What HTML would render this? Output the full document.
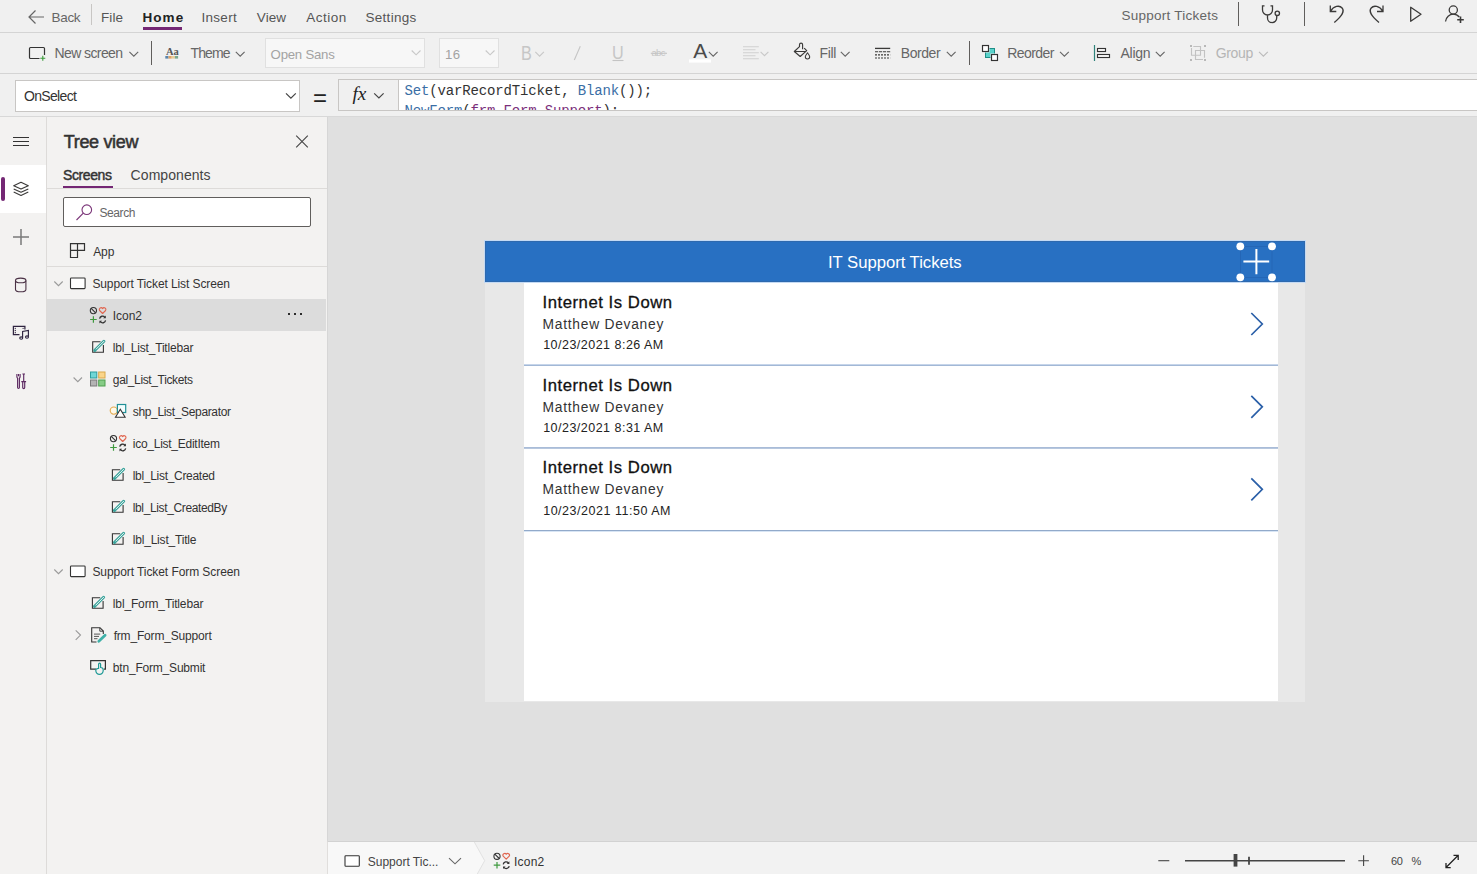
<!DOCTYPE html>
<html><head><meta charset="utf-8"><title>Power Apps</title>
<style>
*{box-sizing:border-box;margin:0;padding:0}
html,body{width:1477px;height:874px;overflow:hidden;background:#f3f2f1;font-family:"Liberation Sans",sans-serif;color:#333}
.a{position:absolute}
.t{position:absolute;white-space:pre}
svg{position:absolute;overflow:visible;fill:none}
#topbar{position:absolute;left:0;top:0;width:1477px;height:33px;background:#f0f0f0;border-bottom:1px solid #d4d4d4}
#toolbar{position:absolute;left:0;top:33px;width:1477px;height:41px;background:#f0f0f0;border-bottom:1px solid #d4d4d4}
#fbar{position:absolute;left:0;top:74px;width:1477px;height:43px;background:#f0f0f0;border-bottom:1px solid #d8d8d8}
#rail{position:absolute;left:0;top:117px;width:47px;height:757px;background:#f3f2f1;border-right:1px solid #dddbd9}
#tree{position:absolute;left:47px;top:117px;width:280px;height:757px;background:#f3f2f1}
#canvas{position:absolute;left:327px;top:117px;width:1150px;height:724px;background:#e0e0e0;border-left:1px solid #d6d6d6}
#status{position:absolute;left:327px;top:841px;width:1150px;height:33px;background:#f2f2f2;border-top:1px solid #d2d2d2;border-left:1px solid #e0dedc}
.vsep{position:absolute;width:1px;background:#605e5c}
.box{position:absolute;border:1px solid #c8c6c4;background:#fff}
</style></head><body>
<div id="topbar"></div>
<div id="toolbar"></div>
<div id="fbar"></div>
<div id="rail"></div>
<div id="tree"></div>
<div id="canvas"></div>
<div id="status"></div>

<!-- top bar decorations -->
<div class="vsep" style="left:91px;top:4px;height:21px;background:#c8c6c4"></div>
<div class="a" style="left:143px;top:27px;width:39px;height:3px;background:#742774"></div>
<div class="vsep" style="left:1238px;top:2px;height:24px"></div>
<div class="vsep" style="left:1304px;top:2px;height:24px"></div>
<!-- toolbar decorations -->
<div class="vsep" style="left:151px;top:41px;height:24px"></div>
<div class="vsep" style="left:969px;top:41px;height:24px"></div>
<div class="box" style="left:265px;top:38px;width:160px;height:30px;background:#f7f7f7;border-color:#e0e0e0"></div>
<div class="box" style="left:439px;top:38px;width:60px;height:30px;background:#f7f7f7;border-color:#e0e0e0"></div>
<!-- formula bar -->
<div class="box" style="left:15px;top:80px;width:285px;height:32px"></div>
<div class="box" style="left:338px;top:79px;width:61px;height:32px;background:#f0f0f0"></div>
<div class="box" style="left:398px;top:79px;width:1085px;height:32px;overflow:hidden;font-family:'Liberation Mono',monospace;font-size:14px;letter-spacing:-0.15px;line-height:20.5px;white-space:pre;color:#333"><div class="a" style="left:5.5px;top:0.8px"><span style="color:#3a6ea5">Set</span>(varRecordTicket, <span style="color:#3a6ea5">Blank</span>());
<span style="color:#3a6ea5">NewForm</span>(<span style="color:#7b2f7b">frm_Form_Support</span>);</div></div>
<!-- rail -->
<div class="a" style="left:0;top:165px;width:46px;height:48px;background:#fff"></div>
<div class="a" style="left:1px;top:177px;width:4px;height:24px;border-radius:2px;background:#742774"></div>
<!-- tree -->
<div class="a" style="left:63px;top:186px;width:50px;height:2px;background:#742774"></div>
<div class="a" style="left:47px;top:188px;width:280px;height:1px;background:#dddbd9"></div>
<div class="a" style="left:63px;top:197px;width:248px;height:30px;background:#fff;border:1px solid #605e5c;border-radius:2px"></div>
<div class="a" style="left:47px;top:266px;width:280px;height:1px;background:#dddbd9"></div>
<div class="a" style="left:47px;top:299px;width:279px;height:32px;background:#dcdcdc"></div>
<!-- canvas app -->
<div class="a" style="left:485px;top:241px;width:820px;height:461px;background:#e8e8e8"></div>
<div class="a" style="left:523.600px;top:282px;width:754.400px;height:419px;background:#fff"></div>
<div class="a" style="left:485px;top:241px;width:820px;height:41px;background:#2870c2;border:1px solid #2e69ae;box-shadow:0 0 0 1px #c4daf4"></div>
<div class="a" style="left:523.600px;top:364px;width:754.400px;height:2px;background:linear-gradient(#c6d5ea 50%,#a2b8d6 50%)"></div>
<div class="a" style="left:523.600px;top:447px;width:754.400px;height:2px;background:linear-gradient(#a9bcd8 50%,#b7c7de 50%)"></div>
<div class="a" style="left:523.600px;top:530px;width:754.400px;height:2px;background:linear-gradient(#92aaca 50%,#d8e5f4 50%)"></div>
<svg width="1477" height="874" style="left:0;top:0" viewBox="0 0 1477 874" stroke-linecap="butt" stroke-linejoin="miter">
<path d="M328 842h146.300l10.400 18.700l-7.400 13.300h-149.300z" fill="#f8f8f8" stroke="none"/><path d="M474.300 842l10.400 18.700l-7.400 13.300" stroke="#e2e2e2" stroke-width="1"/>
<!-- ===== top bar ===== -->
<g stroke="#666" stroke-width="1.2">
<path d="M44 17H29M35.5 10.5L29 17l6.5 6.5"/>
</g>
<g stroke="#3b3a39" stroke-width="1.3">
<!-- stethoscope -->
<path d="M1264.5 5.8h-2v4.2a5 5 0 0 0 10 0V5.8h-2M1267.5 15v3a4.6 4.6 0 0 0 9.2 0v-2.2"/>
<circle cx="1277.3" cy="13.3" r="2.2"/>
<!-- undo -->
<path d="M1330.3 5.5v6h6M1330.6 11.3c3-5.5 9-6.3 11.500-3.300c2.800 3.400 .2 7.500-7.800 14.500"/>
<!-- redo -->
<path d="M1383 5.500v6h-6M1382.700 11.300c-3-5.500-9-6.300-11.500-3.300c-2.800 3.400-.2 7.500 7.800 14.500"/>
<!-- play -->
<path d="M1410.700 7.300v14l10.300-7z" stroke-linejoin="round"/>
<!-- user -->
<circle cx="1453.300" cy="10" r="4.100"/>
<path d="M1445.500 21.500c.5-4.500 4-7.300 7.800-7.300c2.500 0 4.500 1 6 2.800"/>
<path d="M1460.500 16.500v6.500M1457.200 19.700h6.600" stroke-width="1.600"/>
</g>
<!-- ===== toolbar ===== -->
<!-- new screen -->
<rect x="29.500" y="47.500" width="15" height="11" rx="1" stroke="#333" stroke-width="1.200"/>
<rect x="39.500" y="55" width="7" height="6" fill="#f0f0f0" stroke="none"/>
<path d="M42.800 55.800v5M40.300 58.300h5" stroke="#3a9a3a" stroke-width="1.100"/>
<!-- theme colour squares -->
<g stroke="none"><rect x="165.300" y="56" width="3.200" height="2.600" fill="#5b86ad"/><rect x="168.500" y="56" width="3.200" height="2.600" fill="#e0a060"/><rect x="171.700" y="56" width="3.200" height="2.600" fill="#e8cc98"/><rect x="174.900" y="56" width="3.200" height="2.600" fill="#7aa890"/></g>
<!-- chevrons (toolbar) -->
<g stroke="#666" stroke-width="1.100">
<path d="M129.400 51.800l4.400 4.400l4.400-4.400"/>
<path d="M235.800 51.800l4.400 4.400l4.400-4.400"/>
<path d="M708.800 51.800l4.400 4.400l4.400-4.400"/>
<path d="M840.800 51.800l4.400 4.400l4.400-4.400"/>
<path d="M946.800 51.800l4.400 4.400l4.400-4.400"/>
<path d="M1060 51.800l4.400 4.400l4.400-4.400"/>
<path d="M1155.800 51.800l4.400 4.400l4.400-4.400"/>
</g>
<g stroke="#c8c8c8" stroke-width="1.100">
<path d="M411.700 50.500l4.400 4.300l4.400-4.300"/>
<path d="M485.700 50.500l4.400 4.300l4.400-4.300"/>
<path d="M535.300 51.800l4.300 4.300l4.300-4.300"/>
<path d="M760.600 51.800l3.900 3.900l3.900-3.900"/>
<path d="M1259 51.800l4.400 4.400l4.400-4.400" stroke="#bbb"/>
</g>
<!-- italic slash, underline U bar, abc strike -->
<g stroke="#c4c4c4" stroke-width="1.100">
<path d="M580.300 46.200L574.300 60"/>
<path d="M612.500 60.500h11"/>
<path d="M650.800 53.300h16.200"/>
<!-- paragraph align -->
<path d="M743 46.700h15.800M743 49.700h12.500M743 52.700h15.800M743 55.800h12.500M743 58.800h15.800" stroke="#cfcfcf"/>
</g>
<!-- font colour A underline -->
<rect x="689" y="59.400" width="22" height="3.200" fill="#fff" stroke="none"/>
<!-- fill bucket -->
<g stroke="#3b3a39" stroke-width="1.150" stroke-linejoin="round">
<path d="M804.200 48.200L806.700 50.600L800.200 56.500L794.300 51.500L799.500 46.700V44.700a1.550 1.550 0 0 1 3.100 0V49.200M794.300 51.500H806"/>
<path d="M807.500 52.800c-1.100 1.700-2.200 2.900-2.200 4a2.200 2.200 0 0 0 4.400 0c0-1.100-1.100-2.300-2.200-4z" stroke-width="1.050"/>
</g>
<!-- border style -->
<g stroke="#3b3a39">
<path d="M875 48.400h15.200" stroke-width="1.300"/>
<path d="M875 51.700h15.200" stroke-width="1.100" stroke-dasharray="3.200 .8"/>
<path d="M875 54.900h15.200" stroke-width="1.100" stroke-dasharray="2 1"/>
<path d="M875 58h15.200" stroke-width="1.100" stroke-dasharray="2 1"/>
</g>
<!-- reorder -->
<g stroke-width="1">
<rect x="985.500" y="48.500" width="9" height="9" fill="#5ad2ca" stroke="#1f8f88"/>
<rect x="981.500" y="44.500" width="8" height="8" fill="#f7f7f7" stroke="none"/>
<rect x="990.500" y="53.500" width="8" height="8" fill="#f7f7f7" stroke="none"/>
<rect x="982.500" y="45.500" width="6" height="6" fill="#fff" stroke="#333" stroke-width="1.200"/>
<rect x="991.500" y="54.500" width="6" height="6" fill="#fff" stroke="#333" stroke-width="1.200"/>
</g>
<!-- align -->
<path d="M1094.500 45v16" stroke="#2f837b" stroke-width="1.200"/>
<g stroke="#333" stroke-width="1.150" fill="#fff"><rect x="1097.500" y="48.500" width="8" height="3"/><rect x="1097.500" y="54.500" width="12" height="3"/></g>
<!-- group (disabled) -->
<g stroke="#c2c2c2" stroke-width="1.100">
<path d="M1193.300 46.500h7.200v8.800h-9v-7.300"/><path d="M1203 59.500h-7.500v-9h9v7.300"/>
</g>
<g fill="#b8b8b8" stroke="none"><rect x="1190" y="45" width="2" height="2"/><rect x="1204" y="45" width="2" height="2"/><rect x="1190" y="59" width="2" height="2"/><rect x="1204" y="59" width="2" height="2"/></g>
<!-- ===== formula bar ===== -->
<g stroke="#444" stroke-width="1.200">
<path d="M286 93.300l4.900 4.900l4.900-4.900"/>
<path d="M374.200 93.300l4.700 4.700l4.700-4.700"/>
</g>
<!-- ===== rail ===== -->
<g stroke="#3b3a39" stroke-width="1.100">
<path d="M13 137.500h16M13 141.500h16M13 145.500h16" stroke="#333" stroke-width="1.200"/>
<!-- layers -->
<path d="M21 182.300l7.300 3.400l-7.300 3.400l-7.300-3.400zM13.700 188.900l7.300 3.400l7.300-3.400M13.700 192.100l7.300 3.400l7.300-3.400" stroke-linejoin="round"/>
<!-- plus -->
<path d="M21 229v16M13 237h16" stroke="#7a7a7a" stroke-width="1.500"/>
<!-- cylinder -->
<g stroke="#4a3145"><ellipse cx="20.700" cy="280.400" rx="5.200" ry="2.300"/><path d="M15.500 280.400v9a5.200 2.300 0 0 0 10.400 0v-9"/></g>
<!-- media -->
<g stroke="#2f2440" stroke-width="1.250">
<path d="M19.500 334.600H13.400V326.400H24.900V329.600"/>
<path d="M15.300 328.300v.01M15.300 330.500v.01M15.300 332.700v.01M23.100 328.300v.01" stroke-width="1.300" stroke-linecap="round"/>
<path d="M22.600 337.800V331.400L28.400 330.400V336.800" stroke-width="1.150"/>
<ellipse cx="21.200" cy="338.100" rx="1.500" ry="1.200" stroke-width="1.100"/><ellipse cx="27" cy="337.100" rx="1.500" ry="1.200" stroke-width="1.100"/>
</g>
<!-- tools -->
<g stroke="#5d2a62" stroke-width="1.150">
<path d="M16.900 374v2.700a1.900 1.900 0 0 0 .700 1.500v9.400a.900 .900 0 0 0 1.800 0v-9.400a1.900 1.900 0 0 0 .700-1.500v-2.700"/>
<path d="M18.500 374v2.300" stroke-width="1"/>
<path d="M22.400 374h2.600M23.700 374v7.500M21.300 381.600h4.800M22.700 381.600v6a1 1 0 0 0 2 0v-6"/>
</g>
</g>
<!-- ===== tree ===== -->
<path d="M296.200 135.700l11.600 11.600M307.800 135.700l-11.600 11.600" stroke="#444" stroke-width="1.100"/>
<!-- search icon -->
<g stroke="#7a3478" stroke-width="1.100"><circle cx="86.800" cy="209.700" r="4.800"/><path d="M83.300 213.200l-6.800 6.800"/></g>
<!-- App icon -->
<path d="M70.500 243.700h14v6.700h-14zM77.500 243.700v13.800h-7v-7.100" stroke="#333" stroke-width="1.200"/>
<!-- ellipsis -->
<g fill="#2b2b2b" stroke="none"><rect x="288" y="313" width="2" height="2"/><rect x="294" y="313" width="2" height="2"/><rect x="300" y="313" width="2" height="2"/></g>
<!-- tree chevrons -->
<g stroke="#9a9a9a" stroke-width="1.100">
<path d="M54.300 281.500l4.200 4.200l4.200-4.200"/>
<path d="M73.600 377.500l4.200 4.200l4.200-4.200"/>
<path d="M54.300 569.500l4.200 4.200l4.200-4.200"/>
<path d="M75.700 630.300l4.800 4.800l-4.800 4.800"/>
</g>
<!-- screen icons -->
<g stroke="#333" stroke-width="1.100">
<rect x="70.500" y="278" width="14.600" height="10.600" rx=".8" fill="#fff"/>
<rect x="70.500" y="566" width="14.600" height="10.600" rx=".8" fill="#fff"/>
<rect x="345" y="855.700" width="14.300" height="10.600" rx=".8" fill="#fff"/>
</g>
<!-- gallery icon -->
<g stroke-width="1">
<rect x="90.500" y="372" width="6.300" height="6" fill="#6fd6d6" stroke="#2d9c9c"/><rect x="98.700" y="372" width="6.300" height="6" fill="#fad58a" stroke="#d8a84a"/>
<rect x="90.500" y="380" width="6.300" height="6" fill="#b4b4b4" stroke="#7a7a7a"/><rect x="98.700" y="380" width="6.300" height="6" fill="#86cc86" stroke="#4f9f4f"/>
</g>
<!-- ===== status bar ===== -->
<g stroke="#666" stroke-width="1.100"><path d="M449 858.200l6 5.600l6-5.600"/></g>
<g stroke="#444">
<path d="M1158.300 860.700h11" stroke-width="1.100"/>
<path d="M1185 860.700h160" stroke-width="1.600"/>
<path d="M1235.500 854v12.600" stroke-width="3.800"/>
<path d="M1249 856.800v8" stroke-width="1.800"/>
<path d="M1358.300 860.700h10.600M1363.600 855.300v10.800" stroke-width="1.100"/>
<path d="M1446 867.500l12-12M1453.500 855.300h4.700v4.700M1450.700 867.700h-4.700v-4.700" stroke="#222" stroke-width="1.300"/>
</g>
<!-- ===== canvas icons ===== -->
<g stroke="#2a5fa8" stroke-width="1.700"><path d="M1251.300 313l11 11l-11 11"/><path d="M1251.300 395.800l11 11l-11 11"/><path d="M1251.300 478.300l11 11l-11 11"/></g>
<rect x="1240.500" y="246.500" width="31.500" height="31" stroke="#2466b6" stroke-width="1"/>
<path d="M1243.400 261.600h25.800M1256.400 249v25.300" stroke="#fff" stroke-width="2"/>
<g fill="#fff" stroke="none"><circle cx="1240.300" cy="246.300" r="3.900"/><circle cx="1272" cy="246.300" r="3.900"/><circle cx="1240.300" cy="277.300" r="3.900"/><circle cx="1272" cy="277.300" r="3.900"/></g>
</svg>
<svg width="1477" height="874" style="left:0;top:0" viewBox="0 0 1477 874">
<g transform="translate(0,0)" stroke-width="1.1">
<circle cx="93.4" cy="310.6" r="3.1" stroke="#333"/><path d="M91.2 308.400l4.400 4.400" stroke="#333"/>
<path d="M102.600 313.500l-3-3a1.700 1.700 0 0 1 3-1.900a1.700 1.700 0 0 1 3 1.900z" stroke="#e0654f" stroke-linejoin="round"/>
<path d="M93.400 316.200v6.600M90.100 319.500h6.600" stroke="#3f9a3f" stroke-width="1.200"/>
<path d="M99.600 318.600a3 3 0 0 1 5.300-1.300M105.600 320.400a3 3 0 0 1-5.300 1.300" stroke="#333" stroke-width="1.300"/>
<path d="M105.800 315.600v2.600h-2.600zM99.400 323.400v-2.600h2.600z" fill="#333" stroke="none"/>
</g>
<g transform="translate(20.1,128)" stroke-width="1.1">
<circle cx="93.4" cy="310.6" r="3.1" stroke="#333"/><path d="M91.2 308.400l4.400 4.400" stroke="#333"/>
<path d="M102.600 313.500l-3-3a1.700 1.700 0 0 1 3-1.900a1.700 1.700 0 0 1 3 1.900z" stroke="#e0654f" stroke-linejoin="round"/>
<path d="M93.400 316.200v6.600M90.100 319.500h6.600" stroke="#3f9a3f" stroke-width="1.200"/>
<path d="M99.600 318.600a3 3 0 0 1 5.300-1.300M105.600 320.400a3 3 0 0 1-5.300 1.300" stroke="#333" stroke-width="1.300"/>
<path d="M105.800 315.600v2.600h-2.600zM99.400 323.400v-2.600h2.600z" fill="#333" stroke="none"/>
</g>
<g transform="translate(403.6,545.7)" stroke-width="1.1">
<circle cx="93.4" cy="310.6" r="3.1" stroke="#333"/><path d="M91.2 308.400l4.400 4.400" stroke="#333"/>
<path d="M102.600 313.500l-3-3a1.700 1.700 0 0 1 3-1.900a1.700 1.700 0 0 1 3 1.900z" stroke="#e0654f" stroke-linejoin="round"/>
<path d="M93.400 316.200v6.600M90.100 319.500h6.600" stroke="#3f9a3f" stroke-width="1.200"/>
<path d="M99.600 318.600a3 3 0 0 1 5.300-1.300M105.600 320.400a3 3 0 0 1-5.300 1.300" stroke="#333" stroke-width="1.300"/>
<path d="M105.800 315.600v2.600h-2.600zM99.400 323.400v-2.600h2.600z" fill="#333" stroke="none"/>
</g>
<g transform="translate(0,0)">
<path d="M100.500 341.700h-7.800v10.600h10.700v-7.300" stroke="#333" stroke-width="1.100"/>
<path d="M103.900 341.300l-8 8l-1.100 1.100" stroke="#3aa39b" stroke-width="3" stroke-linecap="round"/>
<path d="M103.900 341.300l-7.800 7.800" stroke="#e8f7f5" stroke-width="1" stroke-linecap="round"/>
</g>
<g transform="translate(19.7,128)">
<path d="M100.500 341.700h-7.800v10.600h10.700v-7.300" stroke="#333" stroke-width="1.100"/>
<path d="M103.900 341.300l-8 8l-1.100 1.100" stroke="#3aa39b" stroke-width="3" stroke-linecap="round"/>
<path d="M103.900 341.300l-7.800 7.800" stroke="#e8f7f5" stroke-width="1" stroke-linecap="round"/>
</g>
<g transform="translate(19.7,160)">
<path d="M100.500 341.700h-7.800v10.600h10.700v-7.300" stroke="#333" stroke-width="1.100"/>
<path d="M103.900 341.300l-8 8l-1.100 1.100" stroke="#3aa39b" stroke-width="3" stroke-linecap="round"/>
<path d="M103.900 341.300l-7.800 7.800" stroke="#e8f7f5" stroke-width="1" stroke-linecap="round"/>
</g>
<g transform="translate(19.7,192)">
<path d="M100.500 341.700h-7.800v10.600h10.700v-7.300" stroke="#333" stroke-width="1.100"/>
<path d="M103.900 341.300l-8 8l-1.100 1.100" stroke="#3aa39b" stroke-width="3" stroke-linecap="round"/>
<path d="M103.900 341.300l-7.800 7.800" stroke="#e8f7f5" stroke-width="1" stroke-linecap="round"/>
</g>
<g transform="translate(-0.3,256)">
<path d="M100.500 341.700h-7.800v10.600h10.700v-7.300" stroke="#333" stroke-width="1.100"/>
<path d="M103.900 341.300l-8 8l-1.100 1.100" stroke="#3aa39b" stroke-width="3" stroke-linecap="round"/>
<path d="M103.900 341.300l-7.800 7.800" stroke="#e8f7f5" stroke-width="1" stroke-linecap="round"/>
</g>
<g stroke-width="1.100">
<circle cx="113.800" cy="410.600" r="3.600" stroke="#e3aa4e" fill="#fff9ea"/>
<rect x="117.400" y="404.500" width="8.300" height="8" fill="#f2fdfd" stroke="#1f8f96" stroke-width="1.200"/>
<path d="M120.300 409.300l4.800 8h-9.600z" fill="#fff" stroke="#333" stroke-linejoin="miter"/>
</g>
<g stroke-width="1.100">
<path d="M96.500 642h-4.800v-14.300h8.300l3.300 3.300v3" stroke="#333"/>
<path d="M99.800 627.900v3.300h3.300" stroke="#333" stroke-width=".9"/>
<path d="M94 634.100h6.200M94 636.400h5M94 638.700h3.500" stroke="#444" stroke-width=".9"/>
<path d="M105.100 635.300l-6.300 5.900" stroke="#3fb0a8" stroke-width="2.800" stroke-linecap="round"/>
</g>
<g stroke-width="1.200">
<path d="M96 669.200h-5.300v-8.600h14.700v8.600h-1.500" stroke="#333"/>
<path d="M98.600 669v-4.800a1 1 0 0 1 2 0v3.300c1.500 0 2.600 .9 2.600 2.300v.8a3.700 3.700 0 0 1-7.400 0c0-1.500.8-2.200 2.300-1.900" stroke="#1f9a96" stroke-linejoin="round"/>
</g>
</svg>
<span class="t" style="left:51.62px;top:11.00px;font-size:13.5px;line-height:13.5px;color:#666;letter-spacing:-0.352px;">Back</span>
<span class="t" style="left:101.06px;top:11.00px;font-size:13.5px;line-height:13.5px;color:#555;letter-spacing:0.071px;">File</span>
<span class="t" style="left:142.62px;top:11.00px;font-size:13.5px;line-height:13.5px;color:#222;font-weight:700;letter-spacing:1.008px;">Home</span>
<span class="t" style="left:201.38px;top:11.00px;font-size:13.5px;line-height:13.5px;color:#555;letter-spacing:0.311px;">Insert</span>
<span class="t" style="left:256.86px;top:11.00px;font-size:13.5px;line-height:13.5px;color:#555;letter-spacing:0.043px;">View</span>
<span class="t" style="left:306.30px;top:11.00px;font-size:13.5px;line-height:13.5px;color:#555;letter-spacing:0.510px;">Action</span>
<span class="t" style="left:365.40px;top:11.00px;font-size:13.5px;line-height:13.5px;color:#555;letter-spacing:0.314px;">Settings</span>
<span class="t" style="left:1121.62px;top:9.00px;font-size:13.5px;line-height:13.5px;color:#666;letter-spacing:0.241px;">Support Tickets</span>
<span class="t" style="left:54.62px;top:46.00px;font-size:14px;line-height:14px;color:#666;letter-spacing:-0.611px;">New screen</span>
<span class="t" style="left:190.52px;top:46.00px;font-size:14px;line-height:14px;color:#666;letter-spacing:-0.905px;">Theme</span>
<span class="t" style="left:270.62px;top:48.00px;font-size:13.2px;line-height:13.2px;color:#a3a3a3;letter-spacing:-0.223px;">Open Sans</span>
<span class="t" style="left:444.94px;top:48.00px;font-size:13.2px;line-height:13.2px;color:#a3a3a3;letter-spacing:0.428px;">16</span>
<span class="t" style="left:819.62px;top:46.00px;font-size:14px;line-height:14px;color:#666;letter-spacing:-0.410px;">Fill</span>
<span class="t" style="left:900.84px;top:46.00px;font-size:14px;line-height:14px;color:#666;letter-spacing:-0.458px;">Border</span>
<span class="t" style="left:1007.16px;top:46.00px;font-size:14px;line-height:14px;color:#666;letter-spacing:-0.546px;">Reorder</span>
<span class="t" style="left:1120.52px;top:46.00px;font-size:14px;line-height:14px;color:#666;letter-spacing:-0.265px;">Align</span>
<span class="t" style="left:1215.72px;top:46.00px;font-size:14px;line-height:14px;color:#b5b5b5;letter-spacing:-0.345px;">Group</span>
<span class="t" style="left:23.96px;top:89.00px;font-size:14px;line-height:14px;color:#333;letter-spacing:-0.662px;">OnSelect</span>
<span class="t" style="left:313.00px;top:86.00px;font-size:24px;line-height:24px;color:#222;">=</span>
<span class="t" style="left:63.76px;top:133.00px;font-size:18px;line-height:18px;color:#333;letter-spacing:-0.332px;-webkit-text-stroke:0.55px #333;">Tree view</span>
<span class="t" style="left:62.96px;top:168.00px;font-size:14px;line-height:14px;color:#333;letter-spacing:-0.400px;-webkit-text-stroke:0.45px #333;">Screens</span>
<span class="t" style="left:130.62px;top:168.00px;font-size:14px;line-height:14px;color:#444;letter-spacing:0.065px;">Components</span>
<span class="t" style="left:99.40px;top:207.00px;font-size:12px;line-height:12px;color:#666;letter-spacing:-0.390px;">Search</span>
<span class="t" style="left:93.20px;top:246.00px;font-size:12px;line-height:12px;color:#333;letter-spacing:-0.100px;">App</span>
<span class="t" style="left:92.40px;top:278.00px;font-size:12px;line-height:12px;color:#333;letter-spacing:-0.098px;">Support Ticket List Screen</span>
<span class="t" style="left:112.84px;top:310.00px;font-size:12px;line-height:12px;color:#333;letter-spacing:-0.040px;">Icon2</span>
<span class="t" style="left:112.84px;top:342.00px;font-size:12px;line-height:12px;color:#333;letter-spacing:-0.186px;">lbl_List_Titlebar</span>
<span class="t" style="left:112.84px;top:374.00px;font-size:12px;line-height:12px;color:#333;letter-spacing:-0.360px;">gal_List_Tickets</span>
<span class="t" style="left:132.74px;top:406.00px;font-size:12px;line-height:12px;color:#333;letter-spacing:-0.340px;">shp_List_Separator</span>
<span class="t" style="left:132.74px;top:438.00px;font-size:12px;line-height:12px;color:#333;letter-spacing:-0.256px;">ico_List_EditItem</span>
<span class="t" style="left:132.74px;top:470.00px;font-size:12px;line-height:12px;color:#333;letter-spacing:-0.301px;">lbl_List_Created</span>
<span class="t" style="left:132.74px;top:502.00px;font-size:12px;line-height:12px;color:#333;letter-spacing:-0.366px;">lbl_List_CreatedBy</span>
<span class="t" style="left:132.74px;top:534.00px;font-size:12px;line-height:12px;color:#333;letter-spacing:-0.194px;">lbl_List_Title</span>
<span class="t" style="left:92.40px;top:566.00px;font-size:12px;line-height:12px;color:#333;letter-spacing:-0.070px;">Support Ticket Form Screen</span>
<span class="t" style="left:112.84px;top:598.00px;font-size:12px;line-height:12px;color:#333;letter-spacing:-0.143px;">lbl_Form_Titlebar</span>
<span class="t" style="left:113.64px;top:630.00px;font-size:12px;line-height:12px;color:#333;letter-spacing:-0.170px;">frm_Form_Support</span>
<span class="t" style="left:112.84px;top:662.00px;font-size:12px;line-height:12px;color:#333;letter-spacing:-0.197px;">btn_Form_Submit</span>
<span class="t" style="left:367.74px;top:856.00px;font-size:12px;line-height:12px;color:#444;letter-spacing:-0.005px;">Support Tic...</span>
<span class="t" style="left:513.94px;top:856.00px;font-size:12px;line-height:12px;color:#333;letter-spacing:0.240px;">Icon2</span>
<span class="t" style="left:1391.08px;top:856.00px;font-size:11px;line-height:11px;color:#444;letter-spacing:-0.530px;">60</span>
<span class="t" style="left:1411.50px;top:856.00px;font-size:11px;line-height:11px;color:#444;">%</span>
<span class="t" style="left:827.94px;top:255.00px;font-size:16.7px;line-height:16.7px;color:#fff;letter-spacing:-0.025px;">IT Support Tickets</span>
<span class="t" style="left:542.50px;top:295.00px;font-size:16.7px;line-height:16.7px;color:#111;letter-spacing:0.543px;-webkit-text-stroke:0.3px #111;">Internet Is Down</span>
<span class="t" style="left:542.50px;top:318.00px;font-size:13.8px;line-height:13.8px;color:#333;letter-spacing:0.744px;">Matthew Devaney</span>
<span class="t" style="left:543.18px;top:339.00px;font-size:12.5px;line-height:12.5px;color:#222;letter-spacing:0.482px;">10/23/2021 8:26 AM</span>
<span class="t" style="left:542.50px;top:378.00px;font-size:16.7px;line-height:16.7px;color:#111;letter-spacing:0.543px;-webkit-text-stroke:0.3px #111;">Internet Is Down</span>
<span class="t" style="left:542.50px;top:401.00px;font-size:13.8px;line-height:13.8px;color:#333;letter-spacing:0.744px;">Matthew Devaney</span>
<span class="t" style="left:543.18px;top:422.00px;font-size:12.5px;line-height:12.5px;color:#222;letter-spacing:0.482px;">10/23/2021 8:31 AM</span>
<span class="t" style="left:542.50px;top:460.00px;font-size:16.7px;line-height:16.7px;color:#111;letter-spacing:0.543px;-webkit-text-stroke:0.3px #111;">Internet Is Down</span>
<span class="t" style="left:542.50px;top:483.00px;font-size:13.8px;line-height:13.8px;color:#333;letter-spacing:0.744px;">Matthew Devaney</span>
<span class="t" style="left:543.18px;top:505.00px;font-size:12.5px;line-height:12.5px;color:#222;letter-spacing:0.522px;">10/23/2021 11:50 AM</span>
<span class="t" style="left:166.00px;top:47.00px;font-size:10.5px;line-height:10.5px;color:#555;font-weight:700;font-family:'Liberation Serif',serif;">Aa</span>
<span class="t" style="left:520.70px;top:44.00px;font-size:19.3px;line-height:19.3px;color:#c6c6c6;transform:scaleX(.84);transform-origin:0 0;">B</span>
<span class="t" style="left:612.10px;top:44.00px;font-size:18.8px;line-height:18.8px;color:#c6c6c6;transform:scaleX(.86);transform-origin:0 0;">U</span>
<span class="t" style="left:651.54px;top:48.00px;font-size:9.5px;line-height:9.5px;color:#c4c4c4;letter-spacing:-0.714px;">abc</span>
<span class="t" style="left:693.20px;top:40.00px;font-size:21px;line-height:21px;color:#4a4a4a;">A</span>
<span class="t" style="left:352.50px;top:84.00px;font-size:19.2px;line-height:19.2px;color:#222;font-family:'Liberation Serif',serif;font-style:italic;">fx</span>
</body></html>
